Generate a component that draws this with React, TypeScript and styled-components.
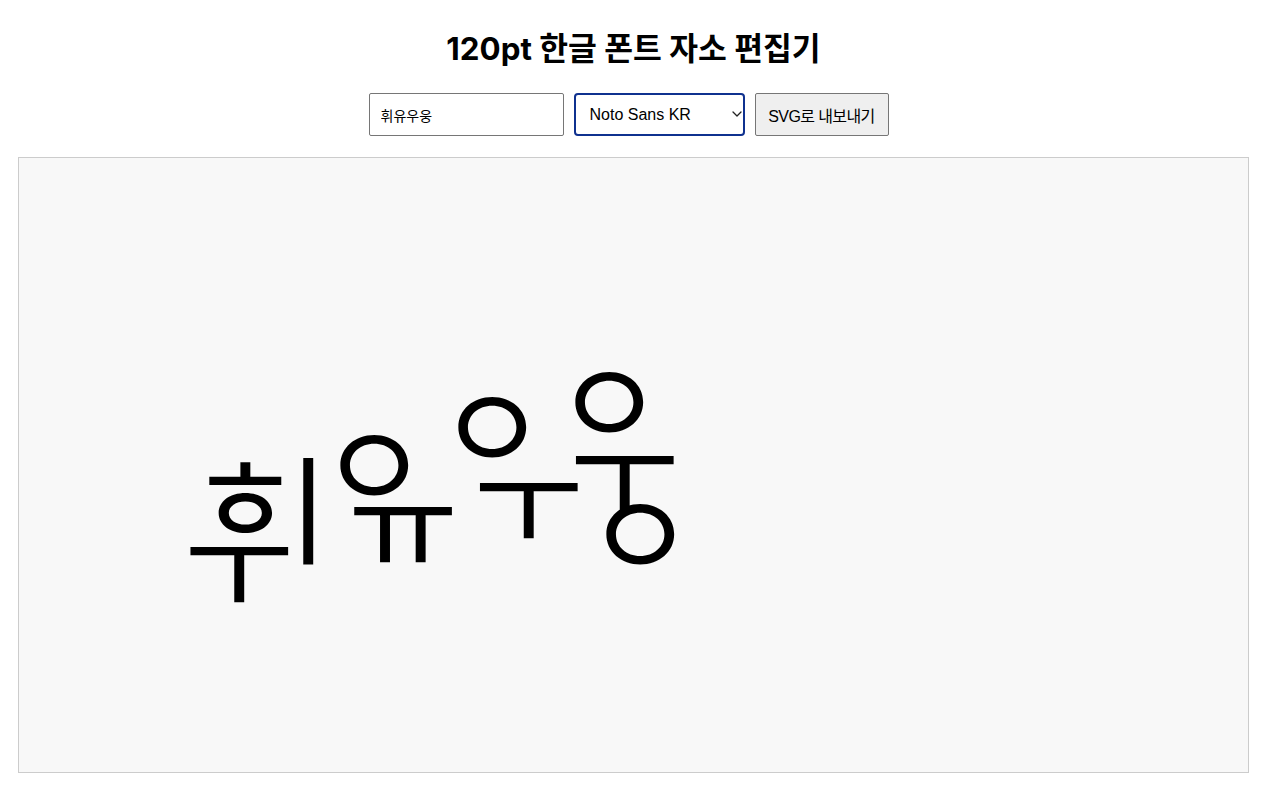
import styled, { createGlobalStyle } from 'styled-components'

const GlobalStyle = createGlobalStyle`
  html, body {
    margin: 0;
    padding: 0;
    background: #ffffff;
  }
  body {
    font-family: Inter, "Noto Sans CJK KR", sans-serif;
    color: #000000;
  }
`

const Page = styled.main`
  width: 1231px;
  margin-left: 18px;
  padding-top: 29px;
`

const Title = styled.h1`
  margin: 0;
  height: 40px;
  line-height: 40px;
  text-align: center;
  font-family: Inter, "Noto Sans CJK KR", sans-serif;
  font-size: 31.3px;
  font-weight: 700;
`

const Controls = styled.div`
  display: flex;
  justify-content: center;
  margin-top: 24px;
`

const TextInput = styled.input`
  box-sizing: border-box;
  width: 195px;
  height: 43px;
  margin-right: 10px;
  padding: 0 11px;
  border: 1px solid #767676;
  border-radius: 2px;
  font-family: "Noto Sans CJK KR", sans-serif;
  font-size: 14px;
  color: #000000;
  background: #ffffff;
  outline: none;
`

const SelectWrap = styled.div`
  position: relative;
  margin-right: 10px;
`

const FontSelect = styled.select`
  box-sizing: border-box;
  width: 171px;
  height: 43px;
  padding: 0 24px 0 14px;
  border: 2px solid #0f318f;
  border-radius: 4px;
  appearance: none;
  font-family: "Liberation Sans", Arial, sans-serif;
  font-size: 16px;
  color: #000000;
  background: #ffffff;
  outline: none;
`

const Chevron = styled.svg`
  position: absolute;
  top: 18px;
  right: 3px;
  width: 10px;
  height: 6px;
  pointer-events: none;
`

const ExportButton = styled.button`
  box-sizing: border-box;
  width: 134px;
  height: 43px;
  margin-right: 10px;
  padding: 0 8px;
  border: 1px solid #767676;
  border-radius: 2px;
  background: #efefef;
  font-family: "Liberation Sans", "Noto Sans CJK KR", sans-serif;
  font-size: 16px;
  letter-spacing: -0.6px;
  color: #000000;
`

const Canvas = styled.div`
  box-sizing: border-box;
  width: 1231px;
  height: 616px;
  margin-top: 21px;
  border: 1px solid #cccccc;
  background: #f8f8f8;
`

const Board = styled.svg`
  display: block;
  width: 100%;
  height: 100%;
`

const Jamo = styled.text`
  font-family: "Noto Sans CJK KR", sans-serif;
  font-size: 120px;
  fill: #000000;
`

type Piece = { ch: string; x: number; y: number }

// each syllable split into its jamo, each jamo moved on its own
const syllables: { ch: string; parts: Piece[] }[] = [
  {
    ch: '휘',
    parts: [
      { ch: 'ㅎ', x: 170.5, y: 385.5 },
      { ch: 'ㅜ', x: 164.6, y: 451.5 },
      { ch: 'ㅣ', x: 233.5, y: 398 },
    ],
  },
  {
    ch: '유',
    parts: [
      { ch: 'ㅇ', x: 300, y: 353 },
      { ch: 'ㅠ', x: 329, y: 411.5 },
    ],
  },
  {
    ch: '우',
    parts: [
      { ch: 'ㅇ', x: 418, y: 315 },
      { ch: 'ㅜ', x: 454, y: 388 },
    ],
  },
  {
    ch: '웅',
    parts: [
      { ch: 'ㅇ', x: 535, y: 289.5 },
      { ch: 'ㅜ', x: 550, y: 361 },
      { ch: 'ㅇ', x: 566, y: 422 },
    ],
  },
]

export default function App() {
  return (
    <>
      <GlobalStyle />
      <Page>
        <Title>120pt 한글 폰트 자소 편집기</Title>
        <Controls>
          <TextInput defaultValue="휘유우웅" />
          <SelectWrap>
            <FontSelect defaultValue="Noto Sans KR">
              <option>Noto Sans KR</option>
              <option>Nanum Gothic</option>
              <option>Nanum Myeongjo</option>
            </FontSelect>
            <Chevron viewBox="0 0 10 6">
              <polyline points="1,1 5,5 9,1" fill="none" stroke="#222222" strokeWidth="1.3" strokeLinecap="round" strokeLinejoin="round" />
            </Chevron>
          </SelectWrap>
          <ExportButton>SVG로 내보내기</ExportButton>
        </Controls>
        <Canvas>
          <Board viewBox="0 0 1229 614">
            {syllables.map((s, i) => (
              <g key={i} data-syllable={s.ch}>
                {s.parts.map((p, j) => (
                  <Jamo key={j} x={p.x} y={p.y}>
                    {p.ch}
                  </Jamo>
                ))}
              </g>
            ))}
          </Board>
        </Canvas>
      </Page>
    </>
  )
}
